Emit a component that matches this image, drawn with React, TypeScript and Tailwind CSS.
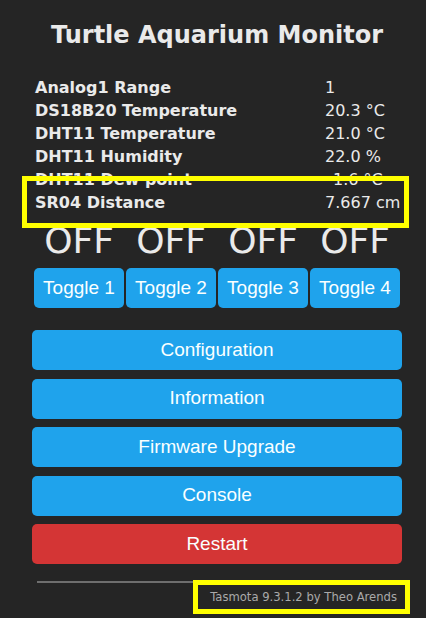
import React from "react"

const sensors: [string, string, string?][] = [
  ["Analog1 Range", "1"],
  ["DS18B20 Temperature", "20.3 °C"],
  ["DHT11 Temperature", "21.0 °C"],
  ["DHT11 Humidity", "22.0 %"],
  ["DHT11 Dew point", "1.6 °C", "pl-[8px]"],
  ["SR04 Distance", "7.667 cm"],
]

const menu = ["Configuration", "Information", "Firmware Upgrade", "Console"]

export default function App() {
  return (
    <div className="relative min-h-[618px] w-full overflow-hidden bg-[#252525] font-['DejaVu_Sans',sans-serif] text-[#eaeaea]">
      <div className="ml-[32px] w-[370px] pt-[21px]">
        <h2 className="text-center text-[24px] font-bold leading-[28px]">Turtle Aquarium Monitor</h2>

        <div className="mt-[27px] flex flex-col px-[3px]">
          {sensors.map(([label, value, extra]) => (
            <div key={label} className="flex h-[23px] items-center whitespace-nowrap text-[16px] leading-[19px]">
              <div className="w-[290px] shrink-0 font-bold">{label}</div>
              <div className={`flex-1 ${extra ?? ""}`}>{value}</div>
            </div>
          ))}
        </div>

        <div className="mt-[6px] grid grid-cols-4 gap-[2px] px-[2px]">
          {[1, 2, 3, 4].map((n) => (
            <div key={n} className="text-center text-[36px] leading-[42px]">OFF</div>
          ))}
        </div>

        <div className="mt-[6px] grid grid-cols-4 gap-[2px] px-[2px] font-['Liberation_Sans',sans-serif]">
          {[1, 2, 3, 4].map((n) => (
            <button key={n} className="h-[40px] rounded-[5px] bg-[#1fa3ec] text-[19px] text-[#faffff]">
              Toggle {n}
            </button>
          ))}
        </div>

        <div className="mt-[22px] flex flex-col gap-[8.5px] font-['Liberation_Sans',sans-serif]">
          {menu.map((item) => (
            <button key={item} className="h-[40px] w-full rounded-[5px] bg-[#1fa3ec] text-[19px] text-[#faffff]">
              {item}
            </button>
          ))}
          <button className="h-[40px] w-full rounded-[5px] bg-[#d43535] text-[19px] text-[#faffff]">Restart</button>
        </div>

        <div className="mt-[17px] text-right text-[11.6px]">
          <div className="mx-[5px] h-[2px] bg-[#6e6e6e]" />
          <div className="mt-[8px] pr-[5px] leading-[13px] text-[#aaaaaa]">Tasmota 9.3.1.2 by Theo Arends</div>
        </div>
      </div>

      <div className="pointer-events-none absolute left-[22px] top-[176px] h-[52px] w-[387px] border-[5px] border-[#ffff00]" />
      <div className="pointer-events-none absolute left-[193px] top-[580px] h-[34px] w-[217px] border-[5px] border-[#ffff00]" />
    </div>
  )
}
